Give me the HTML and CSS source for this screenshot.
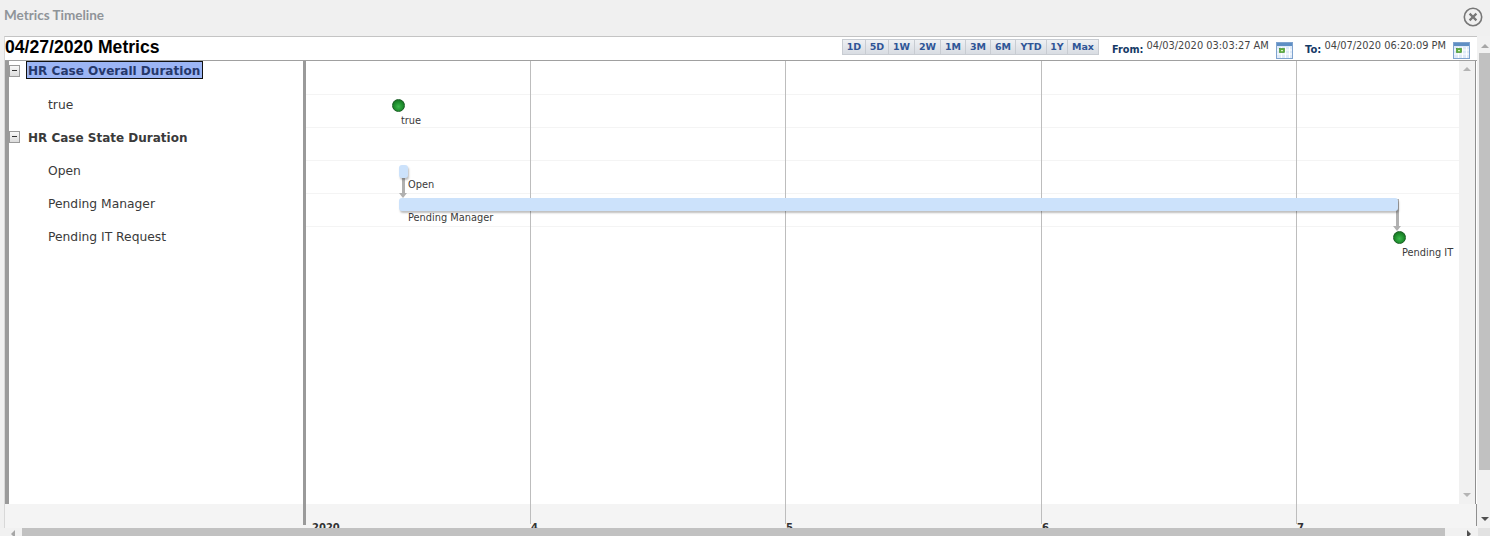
FILE: index.html
```html
<!DOCTYPE html>
<html lang="en">
<head>
<meta charset="utf-8">
<title>Metrics Timeline</title>
<link rel="stylesheet" href="styles.css">
</head>
<body>
<div class="window">
  <header class="titlebar">
    <span class="title">Metrics Timeline</span>
    <svg class="close" width="20" height="20" viewBox="0 0 20 20"><circle cx="10" cy="10" r="8.7" fill="none" stroke="#777" stroke-width="1.6"/><path d="M6.6 6.6l6.8 6.8M13.4 6.6l-6.8 6.8" stroke="#777" stroke-width="2.2" fill="none"/></svg>
  </header>
  <div class="main">
    <div class="content">
      <div class="toolbar">
        <h1 class="heading">04/27/2020 Metrics</h1>
        <div class="ranges">
          <span class="range w23">1D</span><span class="range w23">5D</span><span class="range w26">1W</span><span class="range w26">2W</span><span class="range w25">1M</span><span class="range w25">3M</span><span class="range w25">6M</span><span class="range w31">YTD</span><span class="range w21">1Y</span><span class="range w31">Max</span>
        </div>
        <div class="dates from">
          <span class="date-label">From:</span><span class="date-value">04/03/2020 03:03:27 AM</span>
          <svg class="cal" width="17" height="17" viewBox="0 0 17 17"><rect x=".5" y=".5" width="16" height="16" fill="#dfeaf8" stroke="#7fa3cf"/><rect x="1" y="1" width="15" height="3" fill="#5f8fc4"/><path d="M1 8h15M1 12h15M5.500 5v11M9.500 5v11M13.500 5v11" stroke="#fff" stroke-width="1"/><rect x="3.500" y="6.500" width="5" height="4" fill="#5fae3c" stroke="#3d8a25" stroke-width=".6"/><rect x="5" y="8" width="2" height="1.200" fill="#d8f0c8"/></svg>
        </div>
        <div class="dates to">
          <span class="date-label">To:</span><span class="date-value">04/07/2020 06:20:09 PM</span>
          <svg class="cal" width="17" height="17" viewBox="0 0 17 17"><rect x=".5" y=".5" width="16" height="16" fill="#dfeaf8" stroke="#7fa3cf"/><rect x="1" y="1" width="15" height="3" fill="#5f8fc4"/><path d="M1 8h15M1 12h15M5.500 5v11M9.500 5v11M13.500 5v11" stroke="#fff" stroke-width="1"/><rect x="3.500" y="6.500" width="5" height="4" fill="#5fae3c" stroke="#3d8a25" stroke-width=".6"/><rect x="5" y="8" width="2" height="1.200" fill="#d8f0c8"/></svg>
        </div>
      </div>
      <div class="chart">
        <div class="left-pane">
          <div class="tree-row group"><span class="toggle"></span><span class="group-label selected">HR Case Overall Duration</span></div>
          <div class="tree-row child">true</div>
          <div class="tree-row group"><span class="toggle"></span><span class="group-label">HR Case State Duration</span></div>
          <div class="tree-row child">Open</div>
          <div class="tree-row child">Pending Manager</div>
          <div class="tree-row child">Pending IT Request</div>
        </div>
        <div class="canvas">
          <div class="track"></div><div class="track"></div><div class="track"></div><div class="track"></div><div class="track"></div>
          <div class="gridline g1"></div><div class="gridline g2"></div><div class="gridline g3"></div><div class="gridline g4"></div>
          <span class="dot dot-true"></span>
          <span class="mark-label l-true">true</span>
          <span class="connector c-open"></span><span class="arrow a-open"></span>
          <span class="bar bar-open"></span>
          <span class="mark-label l-open">Open</span>
          <span class="connector c-it"></span><span class="arrow a-it"></span>
          <span class="bar bar-pending"></span>
          <span class="mark-label l-pending">Pending Manager</span>
          <span class="dot dot-it"></span>
          <span class="mark-label l-it">Pending IT</span>
        </div>
        <div class="inner-scroll">
          <span class="tri up"></span><span class="tri down"></span>
        </div>
      </div>
      <div class="axis">
        <div class="axis-spacer"></div>
        <div class="axis-ticks">
          <span class="tick t0">2020</span><span class="tick t1">4</span><span class="tick t2">5</span><span class="tick t3">6</span><span class="tick t4">7</span>
        </div>
      </div>
    </div>
    <div class="outer-v">
      <span class="otri oup"></span>
      <div class="outer-v-thumb"></div>
      <span class="otri odown"></span>
    </div>
  </div>
  <div class="outer-h">
    <span class="htri hleft"></span>
    <div class="outer-h-thumb"></div>
    <span class="htri hright"></span>
    <div class="outer-h-corner"></div>
  </div>
</div>
</body>
</html>
```
FILE: styles.css
```css
* { box-sizing: border-box; }
html, body { margin: 0; height: 536px; overflow: hidden; background: #f0f0f0; }
body { font-family: "Open Sans", "DejaVu Sans", sans-serif; }
.window { width: 1490px; height: 536px; display: flex; flex-direction: column; }
.titlebar { height: 36px; flex: none; display: flex; align-items: flex-start; justify-content: space-between; padding: 7px 7px 0 4px; background: #f0f0f0; }
.title { font-family: "Lato", "Open Sans", sans-serif; font-size: 13.5px; font-weight: 700; color: #8f9499; line-height: 17px; }
.main { flex: none; height: 492px; display: flex; padding-left: 4px; }
.content { width: 1473px; display: flex; flex-direction: column; border-top: 1px solid #c4c4c4; border-left: 1px solid #d8d8d8; background: #fff; }
.toolbar { height: 24px; flex: none; display: flex; align-items: flex-start; border-bottom: 1px solid #a0a0a0; }
.heading { margin: 0; padding-top: 1px; font: 700 17.6px/18px "Liberation Sans", Arial, sans-serif; color: #000; width: 837px; flex: none; }
.ranges { display: flex; margin-top: 2px; height: 16px; background: #e4e8ee; border: 1px solid #c8ccd2; border-left: 0; width: 257px; flex: none; }
.range { font: 700 9.5px/14px "DejaVu Sans", Verdana, sans-serif; color: #2f5597; text-align: center; background: linear-gradient(#eef0f3, #d8dce2); border-left: 1px solid #c8ccd2; flex: none; }
.w21 { width: 21px; }
.w23 { width: 23px; }
.w25 { width: 25px; }
.w26 { width: 26px; }
.w31 { width: 31px; }
.dates { display: flex; align-items: flex-start; flex: none; height: 23px; }
.from { margin-left: 13px; width: 193px; }
.to { width: 178px; }
.date-label { font: 700 9.7px/12px "DejaVu Sans", Verdana, sans-serif; color: #153a66; margin-top: 7px; margin-right: 3px; }
.to .date-label { font-size: 10px; }
.date-value { font: 400 9.85px/12px "DejaVu Sans", Verdana, sans-serif; color: #444; margin-top: 3px; white-space: nowrap; }
.cal { margin-left: 7px; margin-top: 5px; flex: none; }
.chart { flex: none; height: 443px; display: flex; }
.left-pane { width: 301px; flex: none; border-left: 4px solid #9a9a9a; border-right: 3px solid #9a9a9a; background: #fff; }
.tree-row { height: 33px; font: 12.3px/17px "DejaVu Sans", Verdana, sans-serif; color: #3a3a3a; }
.group { display: flex; align-items: flex-start; padding: 3px 0 0 0; font-weight: 700; font-size: 12px; }
.child { padding: 3px 0 0 39px; }
.toggle { position: relative; width: 11px; height: 12px; margin-top: 1px; margin-right: 6px; flex: none; background: linear-gradient(#f8f8f8, #dcdcdc); border: 1px solid #9a9a9a; }
.toggle::after { content: ""; position: absolute; left: 2px; right: 2px; top: 4px; height: 1px; background: #333; }
.group-label { padding: 0 0 0 2px; }
.selected { color: #26386b; background: #9cb5f5; border: 1px solid #111; line-height: 16px; margin-top: -3px; padding: 1px 0 0 1px; height: 18px; width: 177px; white-space: nowrap; font-size: 12.05px; position: relative; }
.canvas { position: relative; width: 1153px; flex: none; height: 443px; padding-top: 1px; overflow: hidden; background: #fff; }
.track { height: 33px; border-bottom: 1px solid #f4f4f4; }
.gridline { position: absolute; top: 0; bottom: 0; width: 1px; background: #bdbdbd; }
.g1 { left: 224px; }
.g2 { left: 479px; }
.g3 { left: 735px; }
.g4 { left: 990px; }
.dot { position: absolute; width: 13px; height: 13px; border-radius: 50%; background: radial-gradient(circle at 50% 60%, #3cb84c 0%, #1f8f2e 50%, #0f5f1a 100%); border: 1px solid #1a5f24; }
.dot-true { left: 86px; top: 38px; }
.dot-it { left: 1087px; top: 170px; }
.mark-label { position: absolute; font: 9.8px/12px "DejaVu Sans", Verdana, sans-serif; color: #3a3a3a; white-space: nowrap; }
.l-true { left: 95px; top: 54px; }
.l-open { left: 102px; top: 118px; }
.l-pending { left: 102px; top: 151px; }
.l-it { left: 1096px; top: 186px; }
.bar { position: absolute; background: #cce2fb; border-radius: 3px; box-shadow: 1px 2px 2px rgba(0,0,0,.25); }
.bar-open { left: 93px; top: 104px; width: 9px; height: 13px; }
.bar-pending { left: 93px; top: 137px; width: 999px; height: 13px; }
.connector { position: absolute; width: 3px; background: #b0b0b0; }
.c-open { left: 96px; top: 117px; height: 15px; }
.c-it { left: 1090px; top: 138px; height: 27px; }
.arrow { position: absolute; width: 0; height: 0; border-left: 4.5px solid transparent; border-right: 4.5px solid transparent; border-top: 5px solid #b0b0b0; }
.a-open { left: 93px; top: 132px; }
.a-it { left: 1087px; top: 165px; }
.inner-scroll { position: relative; width: 17px; flex: none; background: #f1f1f1; border-right: 1px solid #8f8f8f; }
.tri { position: absolute; left: 4px; width: 0; height: 0; border-left: 4px solid transparent; border-right: 4px solid transparent; }
.up { top: 6px; border-bottom: 4px solid #b4b4b4; }
.down { bottom: 7px; border-top: 4px solid #b4b4b4; }
.axis { flex: 1; display: flex; background: #f4f4f4; overflow: hidden; }
.axis-spacer { width: 301px; flex: none; }
.axis-spacer::after { content: ""; display: block; margin-left: 298px; width: 3px; height: 21px; background: #9a9a9a; }
.axis-ticks { position: relative; flex: 1; }
.axis-ticks::after { content: ""; position: absolute; right: 0; top: 0; width: 1px; height: 22px; background: #8f8f8f; }
.tick { position: absolute; top: 17px; font: 700 10px/14px "DejaVu Sans", Verdana, sans-serif; color: #333; padding-left: 1px; }
.tick::before { content: ""; position: absolute; left: 0; top: -17px; width: 1px; height: 20px; background: #bdbdbd; }
.t0 { left: 5px; }
.t0::before { display: none; }
.t1 { left: 224px; }
.t2 { left: 479px; }
.t3 { left: 735px; }
.t4 { left: 990px; }
.outer-v { position: relative; flex: 1; background: #f1f1f1; }
.otri { position: absolute; left: 4px; width: 0; height: 0; border-left: 4px solid transparent; border-right: 4px solid transparent; }
.oup { top: 8px; border-bottom: 4px solid #a6a6a6; }
.odown { bottom: 7px; border-top: 4px solid #505050; }
.outer-v-thumb { position: absolute; left: 2px; right: 0; top: 17px; height: 417px; background: #c1c1c1; }
.outer-h { flex: none; height: 8px; position: relative; background: #f1f1f1; }
.outer-h-thumb { position: absolute; left: 22px; width: 1423px; top: 0; height: 8px; background: #c1c1c1; }
.outer-h-corner { position: absolute; right: 0; top: 0; width: 12px; height: 8px; background: #e2e2e2; }
.htri { position: absolute; top: 2px; width: 0; height: 0; border-top: 4px solid transparent; border-bottom: 4px solid transparent; }
.hleft { left: 11px; border-right: 4px solid #a6a6a6; }
.hright { left: 1467px; border-left: 4px solid #505050; }
```
